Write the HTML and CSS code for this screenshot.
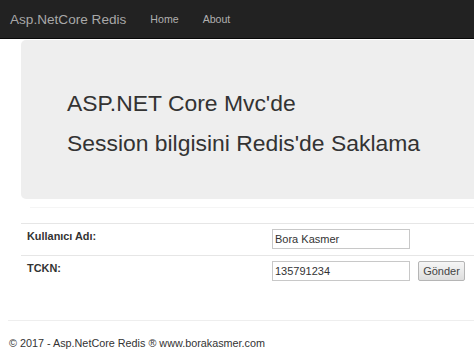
FILE: index.html
```html
<!DOCTYPE html>
<html>
<head>
    <title>Asp.NetCore Redis</title>
    <link rel="stylesheet" href="styles.css">
</head>
<body>
    <div class="navbar">
        <span class="brand">Asp.NetCore Redis</span>
        <span class="nav-link">Home</span>
        <span class="nav-link">About</span>
    </div>

    <div class="page">
        <div class="jumbotron">
            <p>ASP.NET Core Mvc'de</p>
            <p>Session bilgisini Redis'de Saklama</p>
        </div>

        <div class="divider"></div>

        <table class="form-table">
            <tr>
                <td class="label-cell">Kullanıcı Adı:</td>
                <td class="input-cell"><input type="text" value="Bora Kasmer"></td>
                <td></td>
            </tr>
            <tr>
                <td class="label-cell">TCKN:</td>
                <td class="input-cell"><input type="text" value="135791234"></td>
                <td class="btn-cell"><button class="send-btn">Gönder</button></td>
            </tr>
        </table>
    </div>

    <footer class="footer">
        <p>© 2017 - Asp.NetCore Redis ® www.borakasmer.com</p>
    </footer>
</body>
</html>
```

FILE: styles.css
```css
html, body {
    margin: 0;
    background: #fff;
    overflow: hidden;
}

body {
    font-family: "Liberation Sans", Arial, sans-serif;
    color: #333;
}

.navbar {
    height: 38px;
    background: #222;
    border-bottom: 1px solid #080808;
    display: flex;
    align-items: center;
    padding-left: 10px;
}

.brand {
    font-size: 13.6px;
    color: #a8a8a8;
    margin-right: 24px;
}

.nav-link {
    font-size: 10.6px;
    color: #b0b0b0;
    margin-right: 24px;
}

.page {
    padding-left: 21px;
    margin-top: 1px;
}

.jumbotron {
    background: #eee;
    border-radius: 5px 0 0 5px;
    padding: 43px 0 36px 46px;
}

.jumbotron p {
    margin: 0;
    font-size: 22.9px;
    line-height: 40px;
    color: #333;
}

.divider {
    margin: 8px 0 0 9px;
    border-top: 1px solid #f5f5f5;
}

.form-table {
    margin-top: 15px;
    width: 100%;
    border-collapse: collapse;
}

.form-table td {
    border-top: 1px solid #e6e6e6;
    padding: 5px 6px 0;
    height: 25px;
    vertical-align: top;
}

.label-cell {
    width: 233px;
    font-size: 10.9px;
    font-weight: bold;
    padding-top: 6px !important;
}

.input-cell {
    width: 135px;
}

.input-cell input {
    display: block;
    width: 138px;
    height: 20px;
    box-sizing: border-box;
    border: 1px solid #c8c8c8;
    padding: 0 2px;
    font-family: "Liberation Sans", Arial, sans-serif;
    font-size: 11px;
    color: #333;
    background: #fff;
}

.btn-cell {
    padding-left: 2px !important;
}

.send-btn {
    display: block;
    height: 20px;
    width: 47px;
    padding: 0;
    border: 1px solid #b5b5b5;
    border-radius: 2px;
    background: linear-gradient(#f6f6f6, #dedede);
    font-family: "Liberation Sans", Arial, sans-serif;
    font-size: 11px;
    color: #444;
}

.footer {
    margin: 33px 0 0 8px;
    border-top: 1px solid #eee;
}

.footer p {
    margin: 0;
    padding: 15px 0 0 1px;
    font-size: 10.8px;
    line-height: 15px;
}
```
